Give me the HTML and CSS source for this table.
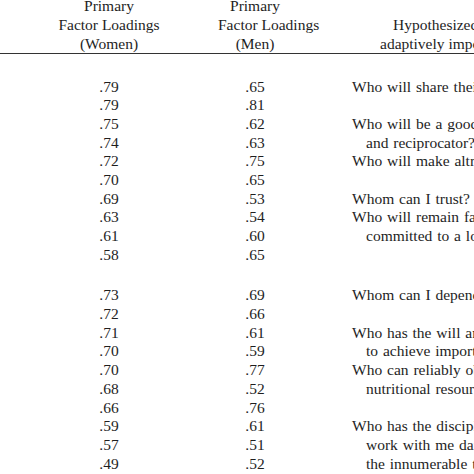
FILE: index.html
```html
<!DOCTYPE html>
<html>
<head>
<meta charset="utf-8">
<link rel="stylesheet" href="styles.css">
</head>
<body>
<div class="table">
  <div class="head">
    <div class="hcell">Primary<br>Factor Loadings<br>(Women)</div>
    <div class="hcell">Primary<br>Factor Loadings<br>(Men)</div>
    <div class="hcell h3"><span class="l0">&nbsp;</span><span class="l1">Hypothesized problem</span><span class="l2">adaptively important question</span></div>
  </div>
  <div class="group first">
    <div class="row"><span class="num">.79</span><span class="num">.65</span><span class="txt">Who will share their resources with me?</span></div>
    <div class="row"><span class="num">.79</span><span class="num">.81</span><span class="txt"></span></div>
    <div class="row"><span class="num">.75</span><span class="num">.62</span><span class="txt">Who will be a good cooperator</span></div>
    <div class="row"><span class="num">.74</span><span class="num">.63</span><span class="txt cont">and reciprocator?</span></div>
    <div class="row"><span class="num">.72</span><span class="num">.75</span><span class="txt">Who will make altruistic sacrifices?</span></div>
    <div class="row"><span class="num">.70</span><span class="num">.65</span><span class="txt"></span></div>
    <div class="row"><span class="num">.69</span><span class="num">.53</span><span class="txt">Whom can I trust?</span></div>
    <div class="row"><span class="num">.63</span><span class="num">.54</span><span class="txt">Who will remain faithful and</span></div>
    <div class="row"><span class="num">.61</span><span class="num">.60</span><span class="txt cont">committed to a long-term bond?</span></div>
    <div class="row"><span class="num">.58</span><span class="num">.65</span><span class="txt"></span></div>
  </div>
  <div class="group">
    <div class="row"><span class="num">.73</span><span class="num">.69</span><span class="txt">Whom can I depend on?</span></div>
    <div class="row"><span class="num">.72</span><span class="num">.66</span><span class="txt"></span></div>
    <div class="row"><span class="num">.71</span><span class="num">.61</span><span class="txt">Who has the will and ability</span></div>
    <div class="row"><span class="num">.70</span><span class="num">.59</span><span class="txt cont">to achieve important goals?</span></div>
    <div class="row"><span class="num">.70</span><span class="num">.77</span><span class="txt">Who can reliably obtain</span></div>
    <div class="row"><span class="num">.68</span><span class="num">.52</span><span class="txt cont">nutritional resources?</span></div>
    <div class="row"><span class="num">.66</span><span class="num">.76</span><span class="txt"></span></div>
    <div class="row"><span class="num">.59</span><span class="num">.61</span><span class="txt">Who has the discipline to</span></div>
    <div class="row"><span class="num">.57</span><span class="num">.51</span><span class="txt cont">work with me daily on</span></div>
    <div class="row"><span class="num">.49</span><span class="num">.52</span><span class="txt cont">the innumerable tasks?</span></div>
  </div>
</div>
</body>
</html>
```

FILE: styles.css
```css
html, body {
  margin: 0;
  padding: 0;
  background: #ffffff;
  overflow: hidden;
}
body {
  width: 474px;
  height: 474px;
  font-family: "Liberation Serif", "Times New Roman", serif;
  font-size: 15.5px;
  line-height: 19px;
  color: #1e1e1e;
}
.table {
  margin-top: -4.5px;
  width: 474px;
}
.head {
  display: grid;
  grid-template-columns: 218px 74px 182px;
  border-bottom: 1px solid #333333;
}
.hcell {
  text-align: center;
  white-space: nowrap;
}
.h3 {
  text-align: left;
  display: flex;
  flex-direction: column;
  overflow: hidden;
}
.h3 .l1 { padding-left: 101px; }
.h3 .l2 { padding-left: 88px; }
.group {
  display: flex;
  flex-direction: column;
  padding-top: 22px;
}
.group.first {
  padding-top: 24px;
}
.row {
  display: grid;
  grid-template-columns: 218px 74px 182px;
  height: 18.7px;
  line-height: 18.7px;
}
.num {
  text-align: center;
}
.txt {
  padding-left: 60px;
  white-space: nowrap;
  overflow: hidden;
  word-spacing: 1px;
}
.txt.cont {
  padding-left: 74px;
}
```
